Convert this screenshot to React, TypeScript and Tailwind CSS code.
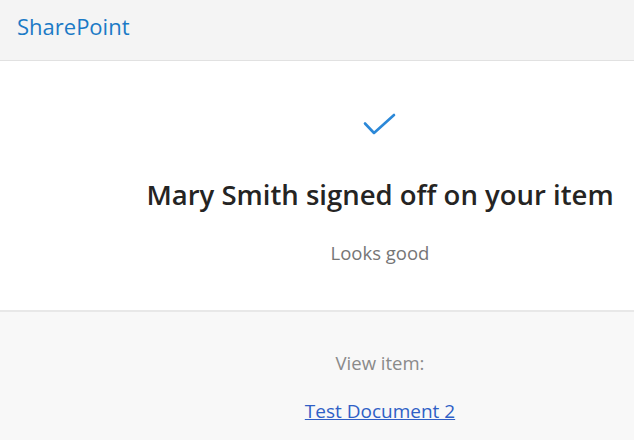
const App = () => {
  return (
    <div className="w-[634px] h-[440px] overflow-hidden bg-[#f8f8f8] font-['Open_Sans',sans-serif]">
      {/* Header */}
      <div className="h-[61px] bg-[#f4f4f4] border-b border-[#e1e1e1] px-[17px] pt-[15px]">
        <span className="block text-[22px] text-[#1b7ac6] leading-none">SharePoint</span>
      </div>

      {/* Body */}
      <div className="bg-white border-b-2 border-[#e8e8e8] h-[251px] pl-[126px] flex flex-col items-center">
        <svg width="36" height="24" viewBox="0 0 36 24" className="mt-[52px] shrink-0" fill="none">
          <path d="M3 10.5 12 20 32 2" stroke="#2b88d8" strokeWidth="2.6" strokeLinecap="round" strokeLinejoin="round" />
        </svg>
        <h1 className="mt-[44px] text-[27.5px] font-semibold text-[#252423] whitespace-nowrap leading-none">
          Mary Smith signed off on your item
        </h1>
        <p className="mt-[35px] text-[18.5px] text-[#767676] leading-none">Looks good</p>
      </div>

      {/* Footer */}
      <div className="pl-[126px] flex flex-col items-center">
        <p className="mt-[42px] text-[18.5px] text-[#8a8a8a] leading-none">View item:</p>
        <a href="#" className="mt-[29px] text-[19px] text-[#2f5fc6] underline leading-none">
          Test Document 2
        </a>
      </div>
    </div>
  );
};

export default App;
